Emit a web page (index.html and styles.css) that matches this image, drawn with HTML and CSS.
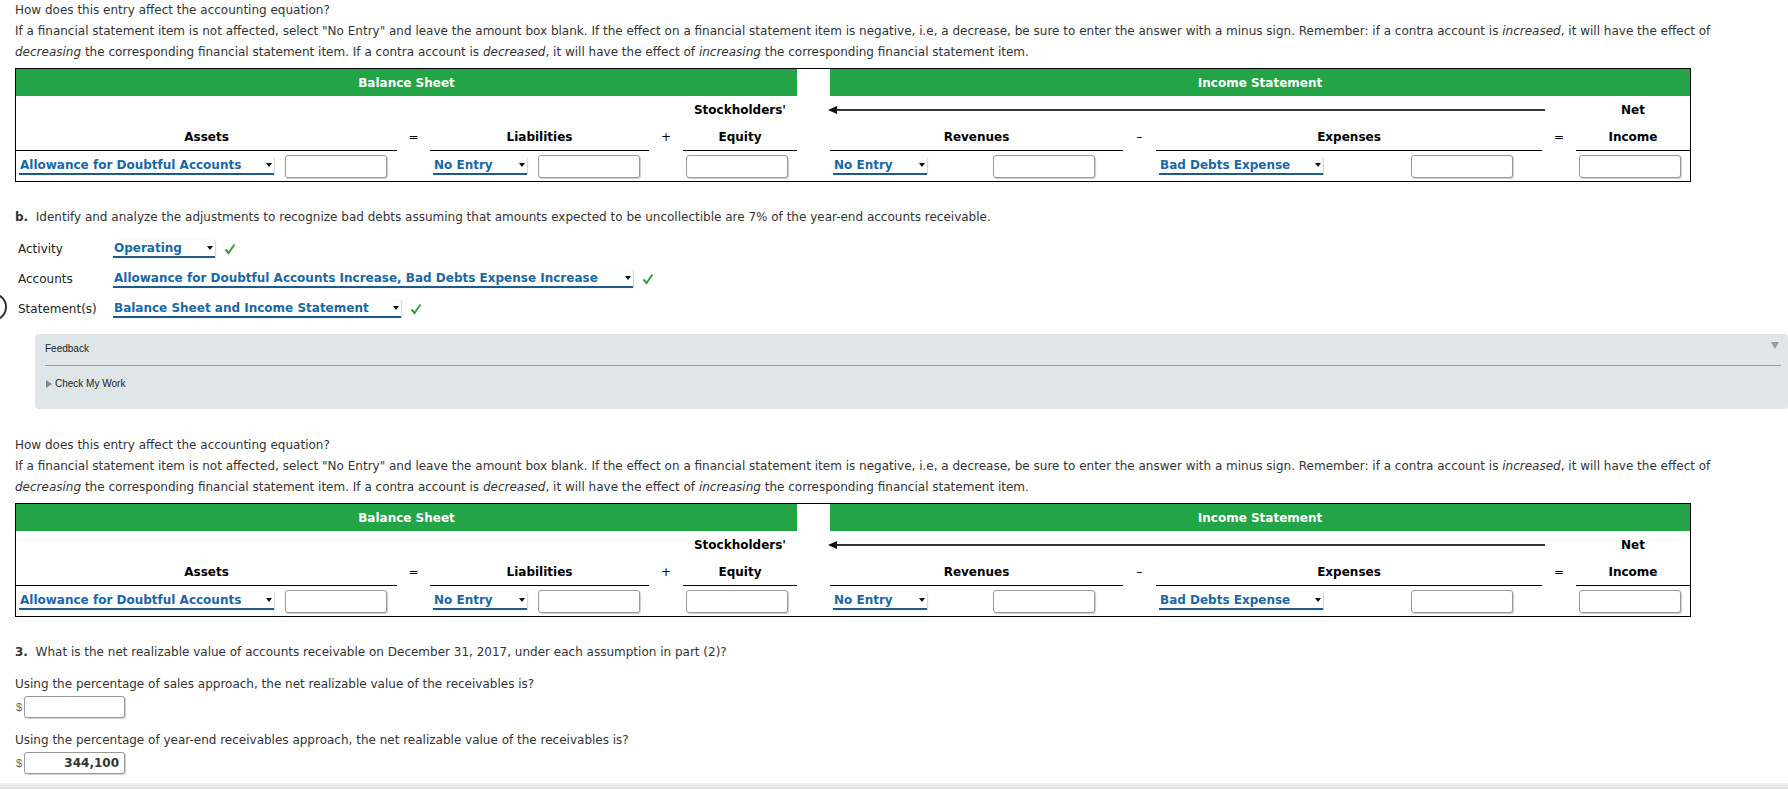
FILE: index.html
```html
<!DOCTYPE html>
<html lang="en">
<head>
  <meta charset="UTF-8">
  <meta name="viewport" content="width=device-width, initial-scale=1.0">
  <title>Bad Debts Adjustment</title>
  <link rel="stylesheet" href="styles.css">
</head>
<body>
  <p>How does this entry affect the accounting equation?</p>
  <p class="rules">If a financial statement item is not affected, select "No Entry" and leave the amount box blank. If the effect on a financial statement item is negative, i.e, a decrease, be sure to enter the answer with a minus sign. Remember: if a contra account is <i>increased</i>, it will have the effect of<br><i>decreasing</i> the corresponding financial statement item. If a contra account is <i>decreased</i>, it will have the effect of <i>increasing</i> the corresponding financial statement item.</p>

  <div class="equation">
    <!-- green headers -->
    <div class="sheet">Balance Sheet</div>
    <div></div>
    <div class="sheet">Income Statement</div>
    <!-- upper labels -->
    <div class="s6"></div>
    <div class="hd">Stockholders'</div>
    <div></div>
    <div class="arrow s5"></div>
    <div></div>
    <div class="hd">Net</div>
    <!-- column heads -->
    <div class="hd under s2">Assets</div>
    <div class="hd sign">=</div>
    <div class="hd under s2">Liabilities</div>
    <div class="hd sign">+</div>
    <div class="hd under">Equity</div>
    <div></div>
    <div class="hd under s2">Revenues</div>
    <div class="hd sign">&ndash;</div>
    <div class="hd under s2">Expenses</div>
    <div class="hd sign">=</div>
    <div class="hd under">Income</div>
    <!-- answers -->
    <div class="cell"><span class="dd dd-allow">Allowance for Doubtful Accounts</span></div>
    <div class="cell amt"><input class="box" type="text"></div>
    <div></div>
    <div class="cell"><span class="dd dd-none">No Entry</span></div>
    <div class="cell amt"><input class="box" type="text"></div>
    <div></div>
    <div class="cell"><input class="box" type="text"></div>
    <div></div>
    <div class="cell"><span class="dd dd-none">No Entry</span></div>
    <div class="cell amt"><input class="box" type="text"></div>
    <div></div>
    <div class="cell"><span class="dd dd-bad">Bad Debts Expense</span></div>
    <div class="cell amt"><input class="box" type="text"></div>
    <div></div>
    <div class="cell"><input class="box" type="text"></div>
  </div>

  <p class="part"><b>b.</b>&nbsp; Identify and analyze the adjustments to recognize bad debts assuming that amounts expected to be uncollectible are 7% of the year-end accounts receivable.</p>
  <div class="picks">
    <div class="pick">
      <span class="pick-label">Activity</span>
      <span class="dd dd-op">Operating</span>
      <svg class="tick" width="12" height="12" viewBox="0 0 12 12"><path d="M1.5 6.5 L4.5 10 L10.5 1.5"/></svg>
    </div>
    <div class="pick">
      <span class="pick-label">Accounts</span>
      <span class="dd dd-acc">Allowance for Doubtful Accounts Increase, Bad Debts Expense Increase</span>
      <svg class="tick" width="12" height="12" viewBox="0 0 12 12"><path d="M1.5 6.5 L4.5 10 L10.5 1.5"/></svg>
    </div>
    <div class="pick">
      <span class="marker"></span>
      <span class="pick-label">Statement(s)</span>
      <span class="dd dd-stmt">Balance Sheet and Income Statement</span>
      <svg class="tick" width="12" height="12" viewBox="0 0 12 12"><path d="M1.5 6.5 L4.5 10 L10.5 1.5"/></svg>
    </div>
  </div>

  <div class="feedback">
    <div class="fb-title">Feedback</div>
    <span class="fb-toggle"></span>
    <div class="fb-check"><span class="fb-arrow"></span>Check My Work</div>
  </div>

  <p class="again">How does this entry affect the accounting equation?</p>
  <p class="rules">If a financial statement item is not affected, select "No Entry" and leave the amount box blank. If the effect on a financial statement item is negative, i.e, a decrease, be sure to enter the answer with a minus sign. Remember: if a contra account is <i>increased</i>, it will have the effect of<br><i>decreasing</i> the corresponding financial statement item. If a contra account is <i>decreased</i>, it will have the effect of <i>increasing</i> the corresponding financial statement item.</p>

  <div class="equation">
    <div class="sheet">Balance Sheet</div>
    <div></div>
    <div class="sheet">Income Statement</div>
    <div class="s6"></div>
    <div class="hd">Stockholders'</div>
    <div></div>
    <div class="arrow s5"></div>
    <div></div>
    <div class="hd">Net</div>
    <div class="hd under s2">Assets</div>
    <div class="hd sign">=</div>
    <div class="hd under s2">Liabilities</div>
    <div class="hd sign">+</div>
    <div class="hd under">Equity</div>
    <div></div>
    <div class="hd under s2">Revenues</div>
    <div class="hd sign">&ndash;</div>
    <div class="hd under s2">Expenses</div>
    <div class="hd sign">=</div>
    <div class="hd under">Income</div>
    <div class="cell"><span class="dd dd-allow">Allowance for Doubtful Accounts</span></div>
    <div class="cell amt"><input class="box" type="text"></div>
    <div></div>
    <div class="cell"><span class="dd dd-none">No Entry</span></div>
    <div class="cell amt"><input class="box" type="text"></div>
    <div></div>
    <div class="cell"><input class="box" type="text"></div>
    <div></div>
    <div class="cell"><span class="dd dd-none">No Entry</span></div>
    <div class="cell amt"><input class="box" type="text"></div>
    <div></div>
    <div class="cell"><span class="dd dd-bad">Bad Debts Expense</span></div>
    <div class="cell amt"><input class="box" type="text"></div>
    <div></div>
    <div class="cell"><input class="box" type="text"></div>
  </div>

  <p class="part"><b>3.</b>&nbsp; What is the net realizable value of accounts receivable on December 31, 2017, under each assumption in part (2)?</p>
  <p class="ask">Using the percentage of sales approach, the net realizable value of the receivables is?</p>
  <div class="money"><span class="money-sign">$</span><input class="box wide" type="text"></div>
  <p class="ask">Using the percentage of year-end receivables approach, the net realizable value of the receivables is?</p>
  <div class="money"><span class="money-sign">$</span><input class="box wide" type="text" value="344,100"></div>

  <div class="page-end"></div>
</body>
</html>
```

FILE: styles.css
```css
body {
  margin: 0;
  padding: 0 0 0 15px;
  font-family: "DejaVu Sans", Verdana, sans-serif;
  font-size: 12px;
  color: #333;
  background: #fff;
  overflow: hidden;
}
p {
  margin: 0;
  line-height: 21px;
}
.rules {
  white-space: nowrap;
}
.equation {
  display: grid;
  grid-template-columns: 264px 117px 33px 103px 116px 34px 114px 33px 158px 135px 33px 250px 136px 34px 114px;
  grid-template-rows: 27px 27px 28px 30px;
  width: 1676px;
  box-sizing: border-box;
  border: 1px solid #000;
  margin-top: 5px;
  color: #000;
  font-weight: bold;
}
.sheet {
  grid-column: span 7;
  background-color: #22a447;
  color: #fff;
  display: flex;
  align-items: center;
  justify-content: center;
}
.s2 { grid-column: span 2; }
.s5 { grid-column: span 5; }
.s6 { grid-column: span 6; }
.hd {
  display: flex;
  align-items: center;
  justify-content: center;
}
.under {
  border-bottom: 1px solid #000;
}
.sign {
  font-weight: normal;
}
.arrow {
  position: relative;
  align-self: center;
  height: 2px;
  margin-right: -3px;
  background-color: #333;
}
.arrow::before {
  content: "";
  position: absolute;
  left: -2px;
  top: -3px;
  border-top: 4px solid transparent;
  border-bottom: 4px solid transparent;
  border-right: 9px solid #111;
}
.cell {
  display: flex;
  align-items: center;
  padding-left: 3px;
}
.cell.amt {
  padding-left: 5px;
}
.dd {
  display: inline-flex;
  align-items: center;
  height: 18px;
  box-sizing: border-box;
  padding-left: 1px;
  border-bottom: 2px solid #1f5b8a;
  border-radius: 2px 2px 0 0;
  background: #fff;
  box-shadow: 1px 0 1px rgba(0, 0, 0, 0.18);
  color: #1b67a4;
  font-weight: bold;
  white-space: nowrap;
}
.dd::after {
  content: "";
  margin-left: auto;
  margin-right: 2px;
  border-left: 3px solid transparent;
  border-right: 3px solid transparent;
  border-top: 4px solid #111;
}
.dd-allow { width: 255px; }
.dd-none { width: 94px; }
.dd-bad { width: 164px; }
.dd-op { width: 102px; }
.dd-acc { width: 520px; }
.dd-stmt { width: 288px; }
.box {
  width: 102px;
  height: 23px;
  box-sizing: border-box;
  margin: 0;
  padding: 0 5px;
  border: 1px solid #999;
  border-radius: 3px;
  box-shadow: 1px 1px 1px rgba(0, 0, 0, 0.2);
  background: #fff;
  font-family: "DejaVu Sans", Verdana, sans-serif;
  font-size: 12px;
  font-weight: bold;
  color: #333;
  text-align: right;
}
.part {
  margin-top: 25px;
}
.picks {
  margin-top: 6px;
}
.pick {
  position: relative;
  display: flex;
  align-items: center;
  height: 30px;
  padding-left: 3px;
}
.pick-label {
  width: 95px;
  color: #222;
}
.tick {
  margin-left: 9px;
}
.tick path {
  fill: none;
  stroke: #3d9c3d;
  stroke-width: 2;
}
.marker {
  position: absolute;
  left: -36px;
  top: -1px;
  width: 28px;
  height: 28px;
  box-sizing: border-box;
  border: 2px solid #333;
  border-radius: 50%;
}
.feedback {
  position: relative;
  height: 75px;
  margin: 10px 0 0 20px;
  padding: 0 7px 0 10px;
  background-color: #dfe6e9;
  border-radius: 4px;
  font-family: "Liberation Sans", Arial, sans-serif;
  font-size: 10px;
  color: #222;
}
.fb-title {
  height: 32px;
  box-sizing: border-box;
  padding-top: 9px;
  line-height: 12px;
  border-bottom: 1px solid #9a9a9a;
}
.fb-toggle {
  position: absolute;
  right: 9px;
  top: 8px;
  border-left: 4px solid transparent;
  border-right: 4px solid transparent;
  border-top: 7px solid #999;
}
.fb-check {
  display: flex;
  align-items: center;
  padding-top: 12px;
  line-height: 12px;
}
.fb-arrow {
  margin: 0 3px 0 1px;
  border-top: 4px solid transparent;
  border-bottom: 4px solid transparent;
  border-left: 6px solid #888;
}
.again {
  margin-top: 26px;
}
.ask {
  margin-top: 11px;
}
.money {
  display: flex;
  align-items: center;
  height: 22px;
  margin-top: 1px;
}
.money + .ask {
  margin-top: 12px;
}
.money-sign {
  width: 8px;
  padding-left: 1px;
  font-family: "Liberation Sans", Arial, sans-serif;
  font-size: 11px;
  color: #666;
}
.box.wide {
  width: 101px;
  height: 22px;
}
.page-end {
  height: 6px;
  margin: 9px 0 0 -15px;
  background: linear-gradient(#f2f2f2, #e1e1e1);
}
```
